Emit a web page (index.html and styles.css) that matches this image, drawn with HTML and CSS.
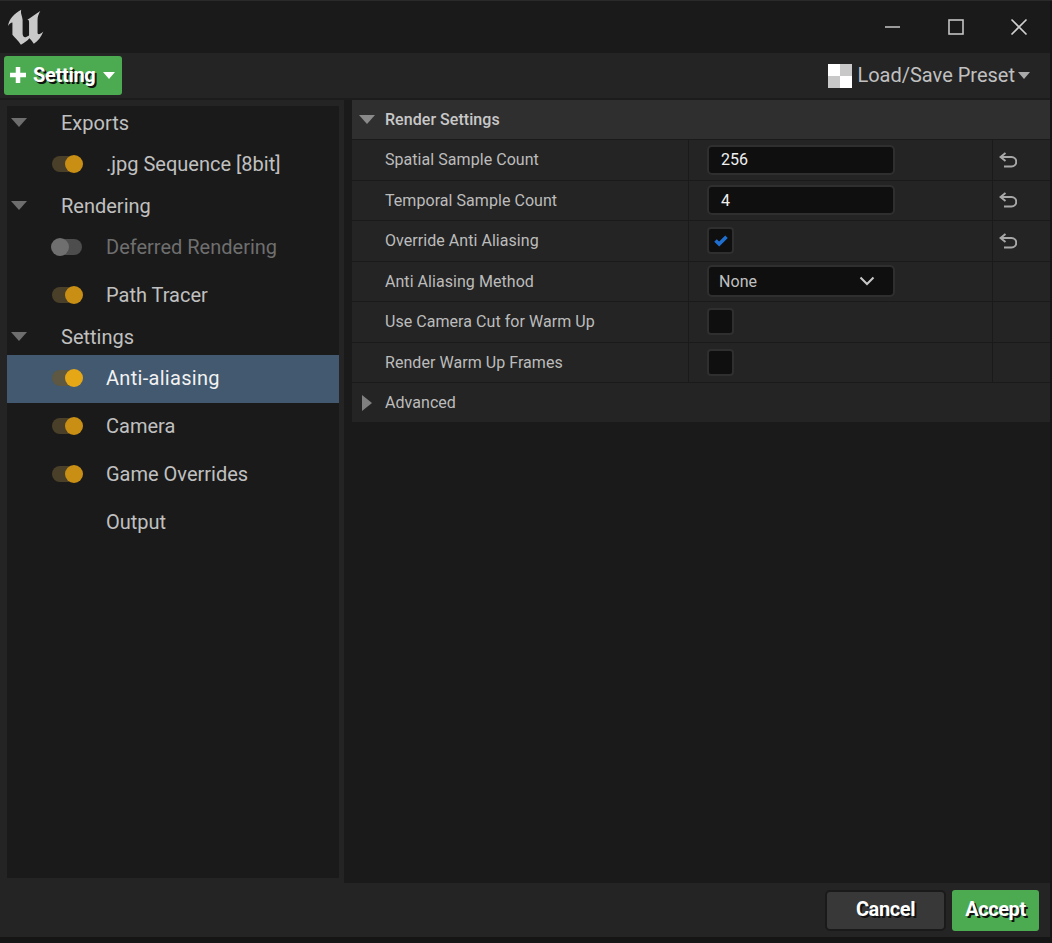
FILE: index.html
```html
<!DOCTYPE html>
<html lang="en">
<head>
    <meta charset="UTF-8">
    <title>Movie Render Queue Settings</title>
    <link rel="stylesheet" href="styles.css">
</head>
<body>
    <div class="window">
        <div class="titlebar">
            <svg class="logo" viewBox="24 24 106 106" width="36" height="36">
                <path fill="#c9c9c9" d="M24 74C27 52 42 38 63 26C60 36 66 44 67 56V96C67 104 71 108 76 107L86 102V64C86 58 85 56 81 56C93 48 106 38 119 30C114 40 111 46 111 56V94C111 100 118 100 128 90C122 106 112 118 100 126C96 120 92 114 87 110C80 118 72 124 62 129C54 118 44 108 37 100V64C32 64 28 68 24 74Z"/>
            </svg>
            <div class="window-buttons">
                <svg width="20" height="20" viewBox="0 0 20 20"><path d="M2 10H17" stroke="#bdbdbd" stroke-width="1.6"/></svg>
                <svg width="20" height="20" viewBox="0 0 20 20"><rect x="3" y="3" width="14" height="14" fill="none" stroke="#c4c4c4" stroke-width="1.6"/></svg>
                <svg width="20" height="20" viewBox="0 0 20 20"><path d="M2.500 2.500L17.500 17.500M17.500 2.500L2.500 17.500" stroke="#d0d0d0" stroke-width="1.6"/></svg>
            </div>
        </div>

        <div class="toolbar">
            <button class="btn-green btn-setting">
                <svg class="plus" width="16" height="16" viewBox="0 0 16 16"><path d="M8 0V16M0 8H16" stroke="#fff" stroke-width="4.500"/></svg>
                <span>Setting</span>
                <span class="caret caret-white"></span>
            </button>
            <div class="preset">
                <span class="checker"><i></i><i></i><i></i><i></i></span>
                <span>Load/Save Preset</span>
                <span class="caret"></span>
            </div>
        </div>

        <div class="main">
            <div class="tree">
                <div class="tree-head"><span class="caret caret-big"></span>Exports</div>
                <div class="tree-item"><span class="toggle on"></span>.jpg Sequence [8bit]</div>
                <div class="tree-head"><span class="caret caret-big"></span>Rendering</div>
                <div class="tree-item off"><span class="toggle"></span>Deferred Rendering</div>
                <div class="tree-item"><span class="toggle on"></span>Path Tracer</div>
                <div class="tree-head"><span class="caret caret-big"></span>Settings</div>
                <div class="tree-item selected"><span class="toggle on"></span>Anti-aliasing</div>
                <div class="tree-item"><span class="toggle on"></span>Camera</div>
                <div class="tree-item"><span class="toggle on"></span>Game Overrides</div>
                <div class="tree-item"><span class="toggle none"></span>Output</div>
            </div>
            <div class="details">
                <div class="section-head"><span class="caret caret-big"></span>Render Settings</div>

                <div class="row">
                    <div class="row-name">Spatial Sample Count</div>
                    <div class="row-value"><div class="input">256</div></div>
                    <div class="row-reset">
                        <svg width="18" height="16" viewBox="0 0 18 16"><path d="M6.500 1L1.500 5L6.500 9M2 5H12.500A4.500 4.500 0 0 1 12.500 14.500H5" fill="none" stroke="#a8a8a8" stroke-width="2"/></svg>
                    </div>
                </div>
                <div class="row">
                    <div class="row-name">Temporal Sample Count</div>
                    <div class="row-value"><div class="input">4</div></div>
                    <div class="row-reset">
                        <svg width="18" height="16" viewBox="0 0 18 16"><path d="M6.500 1L1.500 5L6.500 9M2 5H12.500A4.500 4.500 0 0 1 12.500 14.500H5" fill="none" stroke="#a8a8a8" stroke-width="2"/></svg>
                    </div>
                </div>
                <div class="row">
                    <div class="row-name">Override Anti Aliasing</div>
                    <div class="row-value">
                        <div class="checkbox">
                            <svg width="14" height="12" viewBox="0 0 14 12"><path d="M1.500 5.500L5.200 9L12.500 1.800" fill="none" stroke="#1f6fd0" stroke-width="3.600"/></svg>
                        </div>
                    </div>
                    <div class="row-reset">
                        <svg width="18" height="16" viewBox="0 0 18 16"><path d="M6.500 1L1.500 5L6.500 9M2 5H12.500A4.500 4.500 0 0 1 12.500 14.500H5" fill="none" stroke="#a8a8a8" stroke-width="2"/></svg>
                    </div>
                </div>
                <div class="row">
                    <div class="row-name">Anti Aliasing Method</div>
                    <div class="row-value">
                        <div class="combo">
                            <span>None</span>
                            <svg width="16" height="10" viewBox="0 0 16 10"><path d="M1.500 1.500L8 8L14.500 1.500" fill="none" stroke="#c8c8c8" stroke-width="2"/></svg>
                        </div>
                    </div>
                    <div class="row-reset"></div>
                </div>
                <div class="row">
                    <div class="row-name">Use Camera Cut for Warm Up</div>
                    <div class="row-value"><div class="checkbox"></div></div>
                    <div class="row-reset"></div>
                </div>
                <div class="row">
                    <div class="row-name">Render Warm Up Frames</div>
                    <div class="row-value"><div class="checkbox"></div></div>
                    <div class="row-reset"></div>
                </div>
                <div class="advanced"><span class="caret-right"></span>Advanced</div>
            </div>
        </div>

        <div class="footer">
            <button class="btn-cancel">Cancel</button>
            <button class="btn-green btn-accept">Accept</button>
        </div>
    </div>
</body>
</html>
```

FILE: styles.css
```css
* {
    box-sizing: border-box;
}

body {
    margin: 0;
    background: #151515;
    font-family: Roboto, sans-serif;
    overflow: hidden;
}

.window {
    width: 1052px;
    height: 943px;
    display: flex;
    flex-direction: column;
    background: #151515;
    border-top: 1px solid #2a2a2a;
    padding: 0 2px 6px 0;
}

.titlebar {
    height: 52px;
    display: flex;
    justify-content: space-between;
    align-items: center;
    background: #1a1a1a;
    padding-left: 8px;
    flex-shrink: 0;
}

.logo {
    margin-top: -1px;
}

.window-buttons {
    display: flex;
    gap: 43px;
    padding-right: 21px;
}

.toolbar {
    height: 45px;
    display: flex;
    justify-content: space-between;
    align-items: center;
    background: #242424;
    padding: 0 20px 0 4px;
    flex-shrink: 0;
}

.btn-green {
    background: #4cab50;
    border: 0;
    border-radius: 3px;
    color: #fff;
    font-family: Roboto, sans-serif;
    font-weight: 700;
    font-size: 20px;
    letter-spacing: -0.3px;
    text-shadow: 2px 2px 0 #111;
}

.btn-setting {
    width: 118px;
    height: 39px;
    display: flex;
    align-items: center;
    padding: 0 0 0 6px;
    margin-top: -1px;
}

.btn-setting .plus {
    margin-right: 7px;
}

.btn-setting .caret-white {
    margin-left: 8px;
}

.caret {
    display: inline-block;
    width: 0;
    height: 0;
    border-left: 6px solid transparent;
    border-right: 6px solid transparent;
    border-top: 7px solid #aaa;
}

.caret-white {
    border-top-color: #fff;
}

.caret-big {
    border-left-width: 8px;
    border-right-width: 8px;
    border-top: 9px solid #6e6e6e;
}

.preset {
    display: flex;
    align-items: center;
    color: #c0c0c0;
    font-size: 20px;
    padding-bottom: 2px;
}

.preset .caret {
    margin-left: 3px;
    margin-top: 2px;
}

.checker {
    width: 24px;
    height: 24px;
    display: grid;
    grid-template-columns: 1fr 1fr;
    margin: 2px 5px 0 0;
}

.checker i:nth-child(1),
.checker i:nth-child(4) {
    background: #fff;
}

.checker i:nth-child(2),
.checker i:nth-child(3) {
    background: #c8c8c8;
}

.main {
    flex: 1;
    display: flex;
    background: #242424;
    border-top: 2px solid #1c1c1c;
    min-height: 0;
}

.tree {
    width: 332px;
    margin: 6px 5px 5px 7px;
    background: #1a1a1a;
    font-size: 20px;
    color: #c0c0c0;
}

.tree-head {
    height: 35px;
    display: flex;
    align-items: center;
    padding: 0 0 2px 4px;
}

.tree-head .caret {
    margin-right: 34px;
}

.tree-item {
    height: 48px;
    display: flex;
    align-items: center;
    padding: 0 0 2px 45px;
}

.tree-item.off {
    color: #6f6f6f;
}

.tree-item.selected {
    background: #42596f;
    color: #f2f2f2;
    letter-spacing: 0.3px;
}

.toggle {
    position: relative;
    width: 30px;
    height: 16px;
    margin-right: 24px;
    border-radius: 8px;
    background: #4d4d4d;
}

.toggle::after {
    content: "";
    position: absolute;
    top: -1px;
    left: -1px;
    width: 18px;
    height: 18px;
    border-radius: 50%;
    background: #6f6f6f;
}

.toggle.on {
    background: #4a4029;
}

.toggle.on::after {
    left: auto;
    right: -1px;
    background: #c98f14;
}

.selected .toggle.on {
    background: #5e5742;
}

.selected .toggle.on::after {
    background: #e6a717;
}

.toggle.none {
    visibility: hidden;
}

.details {
    flex: 1;
    padding-left: 8px;
    background: #1a1a1a;
    font-size: 16px;
    letter-spacing: 0.05px;
    color: #bcbcbc;
}

.section-head {
    height: 40px;
    display: flex;
    align-items: center;
    padding-left: 7px;
    background: #2f2f2f;
    border-bottom: 1px solid #1a1a1a;
    font-weight: 500;
    color: #c8c8c8;
}

.section-head .caret {
    margin-right: 10px;
    border-top-color: #8a8a8a;
}

.row {
    height: 40.5px;
    display: flex;
    background: #242424;
    border-bottom: 1px solid #1a1a1a;
}

.row-name {
    width: 337px;
    display: flex;
    align-items: center;
    padding-left: 33px;
    border-right: 1px solid #1a1a1a;
}

.row-value {
    width: 304px;
    display: flex;
    align-items: center;
    padding-left: 18px;
    border-right: 1px solid #1a1a1a;
}

.row-reset {
    flex: 1;
    display: flex;
    align-items: center;
    padding-left: 6px;
}

.input {
    width: 188px;
    height: 30px;
    display: flex;
    align-items: center;
    padding-left: 12px;
    background: #0f0f0f;
    border: 2px solid #2f2f2f;
    border-radius: 5px;
    color: #f0f0f0;
}

.combo {
    width: 188px;
    height: 32px;
    display: flex;
    align-items: center;
    justify-content: space-between;
    padding: 0 18px 0 10px;
    background: #0f0f0f;
    border: 2px solid #2f2f2f;
    border-radius: 5px;
    color: #c0c0c0;
}

.checkbox {
    width: 27px;
    height: 27px;
    display: flex;
    align-items: center;
    justify-content: center;
    background: #0f0f0f;
    border: 2px solid #2f2f2f;
    border-radius: 4px;
}

.advanced {
    height: 39px;
    display: flex;
    align-items: center;
    padding-left: 10px;
    background: #242424;
}

.caret-right {
    width: 0;
    height: 0;
    border-top: 8px solid transparent;
    border-bottom: 8px solid transparent;
    border-left: 10px solid #808080;
    margin-right: 13px;
}

.footer {
    height: 54px;
    display: flex;
    justify-content: flex-end;
    align-items: center;
    gap: 6px;
    padding-right: 11px;
    background: #242424;
    flex-shrink: 0;
}

.btn-cancel {
    width: 121px;
    height: 41px;
    padding: 0 0 2px;
    background: #383838;
    border: 2px solid #1a1a1a;
    border-radius: 5px;
    color: #fff;
    font-family: Roboto, sans-serif;
    font-weight: 700;
    font-size: 20px;
    letter-spacing: -0.4px;
    text-shadow: 2px 2px 0 #111;
}

.btn-accept {
    width: 87px;
    height: 41px;
    padding: 0 0 2px;
    letter-spacing: -0.4px;
}
```
